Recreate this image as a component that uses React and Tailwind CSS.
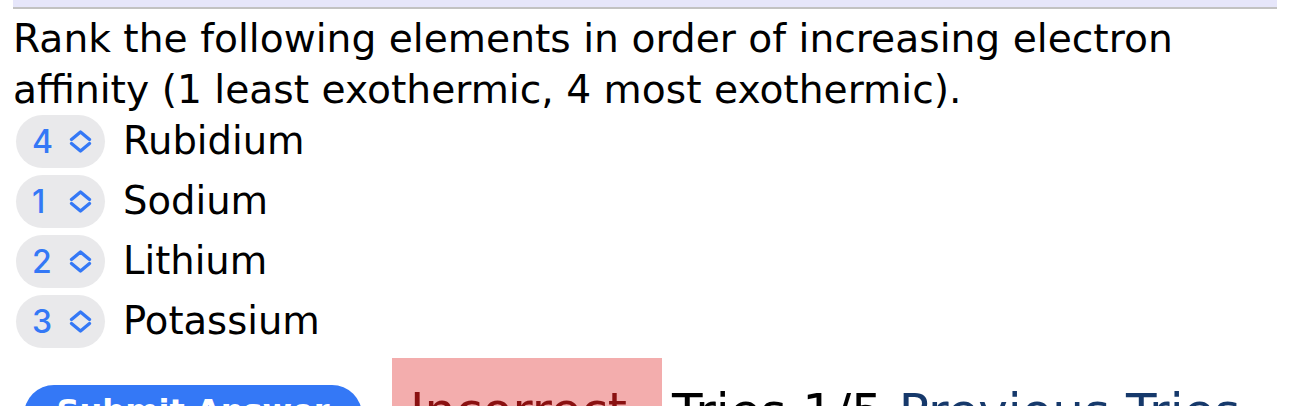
import React from 'react';

const rows = [
  { rank: '4', name: 'Rubidium' },
  { rank: '1', name: 'Sodium' },
  { rank: '2', name: 'Lithium' },
  { rank: '3', name: 'Potassium' },
];

const Chevrons = () => (
  <svg width="23" height="23" viewBox="0 0 23 23" fill="none" stroke="#3478f6" strokeWidth="3.3" strokeLinecap="round" strokeLinejoin="round">
    <path d="M2.5 9.5 L11.5 2 L20.5 9.5" />
    <path d="M2.5 13.5 L11.5 21 L20.5 13.5" />
  </svg>
);

const RankSelect = ({ value }) => (
  <div className="flex items-center h-[53px] w-[89px] rounded-full bg-[#e9e9eb] pl-[16px] gap-[17px] shrink-0">
    <span className="text-[32px] leading-none text-[#3478f6] font-medium font-['Inter',sans-serif] w-[20px]">{value}</span>
    <Chevrons />
  </div>
);

export default function App() {
  return (
    <div className="w-[1290px] h-[406px] overflow-hidden bg-white font-['DejaVu_Sans',Verdana,sans-serif] text-black">
      <div className="mx-[13px] h-[9px] bg-[#e6e6fa] border-b-2 border-[#c2c2c2]" />
      <p className="pl-[13px] pr-[13px] pt-[4px] text-[39.2px] leading-[51px]">
        Rank the following elements in order of increasing electron affinity (1 least exothermic, 4 most exothermic).
      </p>
      <div className="flex flex-col gap-[7px] pl-[16px]">
        {rows.map((r) => (
          <div key={r.name} className="flex items-center gap-[18px] h-[53px]">
            <RankSelect value={r.rank} />
            <span className="text-[38.5px] leading-none -mt-[1px]">{r.name}</span>
          </div>
        ))}
      </div>
      <div className="flex items-start mt-[10px] pl-[24px]">
        <button className="mt-[27px] w-[338px] h-[70px] rounded-[30px] bg-[#3478f6] text-white font-bold text-[32px] leading-none flex items-start justify-center pt-[10px] shrink-0">
          Submit Answer
        </button>
        <div className="ml-[30px] w-[270px] h-[100px] bg-[#f3adad] pl-[18px] pt-[29px] shrink-0">
          <span className="text-[49px] leading-none text-[#8a1111] whitespace-nowrap">Incorrect.</span>
        </div>
        <div className="ml-[10px] pt-[29px] text-[50px] leading-none whitespace-nowrap">
          <span>Tries 1/5 </span>
          <span className="text-[#16396b]">Previous Tries</span>
        </div>
      </div>
    </div>
  );
}
